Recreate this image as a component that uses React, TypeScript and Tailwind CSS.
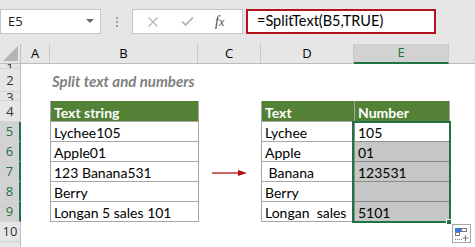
import React from "react";

const cellFont = { fontFamily: "Lato, 'Liberation Sans', sans-serif" };
const uiFont = { fontFamily: "'Open Sans', 'Liberation Sans', sans-serif" };

type Row = { n: string; h: number; sel?: boolean; kind?: "title" | "head" | "data" | "empty"; b?: string; d?: string; e?: string; eActive?: boolean; arrow?: boolean };

const rows: Row[] = [
  { n: "1", h: 5, kind: "empty" },
  { n: "2", h: 23, kind: "title" },
  { n: "3", h: 9, kind: "empty" },
  { n: "4", h: 21, kind: "head", b: "Text string", d: "Text", e: "Number" },
  { n: "5", h: 20, sel: true, kind: "data", b: "Lychee105", d: "Lychee", e: "105", eActive: true },
  { n: "6", h: 20, sel: true, kind: "data", b: "Apple01", d: "Apple", e: "01" },
  { n: "7", h: 20, sel: true, kind: "data", b: "123 Banana531", d: "\u00a0Banana", e: "123531", arrow: true },
  { n: "8", h: 20, sel: true, kind: "data", b: "Berry", d: "Berry", e: "" },
  { n: "9", h: 20, sel: true, kind: "data", b: "Longan 5 sales 101", d: "Longan\u00a0 sales", e: "5101" },
  { n: "10", h: 20, kind: "empty" },
  { n: "11", h: 20, kind: "empty" },
];

function RowHeader({ r }: { r: Row }) {
  return (
    <div
      className={`w-[21px] shrink-0 flex justify-center overflow-hidden border-b border-[#d4d4d4] text-[13px] leading-none ${
        r.sel ? "bg-[#d2d2d2] text-[#217346] border-r-2 border-r-[#217346]" : "bg-[#e6e6e6] text-[#333] border-r border-r-[#bdbdbd]"
      } ${r.h < 12 ? (r.n === "1" ? "items-end" : "items-start") : "items-center"}`}
      style={{ ...uiFont, height: r.h }}
    >
      <span className={r.n === "1" ? "translate-y-[6px]" : r.n === "3" ? "-translate-y-[1px]" : ""}>{r.n}</span>
    </div>
  );
}

function GridRow({ r }: { r: Row }) {
  const isTable = r.kind === "head" || r.kind === "data";
  const head = r.kind === "head";
  const cellBase = "flex items-end pb-[1px] px-[3px] text-[14px] leading-none whitespace-nowrap overflow-hidden";
  return (
    <div className="flex" style={{ height: r.h }}>
      <RowHeader r={r} />
      <div className="w-[29px] shrink-0 bg-white" />
      {r.kind === "title" ? (
        <div className="w-[149px] shrink-0 bg-white flex items-end pb-[3px] pl-[2px]">
          <span className="text-[15px] font-bold italic text-[#7f7f7f] leading-none whitespace-nowrap" style={cellFont}>
            Split text and numbers
          </span>
        </div>
      ) : isTable ? (
        <div
          className={`w-[149px] shrink-0 border-x border-b border-[#a6a6a6] ${cellBase} ${head ? "bg-[#538135] text-white font-bold" : "bg-white text-black"}`}
          style={cellFont}
        >
          {r.b}
        </div>
      ) : (
        <div className="w-[149px] shrink-0 bg-white" />
      )}
      <div className="w-[62px] shrink-0 bg-white flex items-center justify-center">
        {r.arrow && (
          <svg width="40" height="8" viewBox="0 0 40 8" className="mt-[1px]">
            <line x1="2" y1="4" x2="30" y2="4" stroke="#b01010" strokeWidth="1.3" />
            <polygon points="28,1 37,4 28,7" fill="#b01010" />
          </svg>
        )}
      </div>
      {isTable ? (
        <>
          <div
            className={`w-[93px] shrink-0 border-l border-b border-[#a6a6a6] ${cellBase} ${head ? "bg-[#538135] text-white font-bold" : "bg-white text-black"}`}
            style={cellFont}
          >
            {r.d}
          </div>
          <div
            className={`w-[96px] shrink-0 border-x border-b ${cellBase} ${
              head
                ? "bg-[#538135] text-white font-bold border-[#a6a6a6]"
                : r.eActive
                ? "bg-white text-black border-[#8c8c8c]"
                : "bg-[#c6c6c6] text-black border-[#8c8c8c]"
            }`}
            style={cellFont}
          >
            {r.e}
          </div>
        </>
      ) : (
        <div className="w-[189px] shrink-0 bg-white" />
      )}
      <div className="flex-1 bg-white" />
    </div>
  );
}

function ColHeader({ label, w, sel }: { label: string; w: number; sel?: boolean }) {
  return (
    <div
      className={`shrink-0 h-[20px] flex items-center justify-center text-[13px] border-r border-[#c8c8c8] ${
        sel ? "bg-[#d2d2d2] text-[#217346] border-b-2 border-b-[#217346]" : "bg-[#e6e6e6] text-black border-b border-b-[#bdbdbd]"
      }`}
      style={{ ...uiFont, width: w }}
    >
      {label}
    </div>
  );
}

export default function App() {
  return (
    <div className="w-[475px] h-[247px] overflow-hidden bg-white relative select-none">
      {/* formula bar */}
      <div className="h-[44px] bg-[#e6e6e6] flex items-start pt-[9px]">
        <div className="w-[101px] h-[25px] bg-white border border-[#c6c6c6] flex items-center justify-between pl-[7px] pr-[6px]">
          <span className="text-[13px] text-[#222]" style={uiFont}>E5</span>
          <svg width="8" height="5" viewBox="0 0 8 5"><polygon points="0,0 8,0 4,4" fill="#6a6a6a" /></svg>
        </div>
        <div className="w-[31px] h-[25px] flex flex-col items-center justify-center gap-[2px]">
          <div className="w-[2px] h-[2px] bg-[#a0a0a0]" />
          <div className="w-[2px] h-[2px] bg-[#a0a0a0]" />
          <div className="w-[2px] h-[2px] bg-[#a0a0a0]" />
        </div>
        <div className="w-[111px] h-[25px] bg-white border border-[#c6c6c6] flex items-center">
          <svg width="12" height="12" viewBox="0 0 12 12" className="ml-[14px]">
            <path d="M1.5 1.5 L10.5 10.5 M10.5 1.5 L1.5 10.5" stroke="#b8b8b8" strokeWidth="1.3" />
          </svg>
          <svg width="13" height="11" viewBox="0 0 13 11" className="ml-[22px]">
            <path d="M1 5.5 L4.5 9 L12 1.5" stroke="#b8b8b8" strokeWidth="1.8" fill="none" />
          </svg>
          <span className="ml-[21px] text-[14px] italic text-[#444] leading-none" style={{ fontFamily: "'Liberation Serif', serif" }}>
            f<span className="text-[12px]">x</span>
          </span>
        </div>
        <div className="w-[3px]" />
        <div className="w-[190px] h-[25px] bg-white border-2 border-[#b5121b] flex items-center pl-[9px]">
          <span className="text-[14.5px] text-black leading-none" style={cellFont}>=SplitText(B5,TRUE)</span>
        </div>
      </div>
      {/* column headers */}
      <div className="flex h-[20px]">
        <div className="w-[21px] shrink-0 h-[20px] bg-[#e6e6e6] border-r border-b border-[#bdbdbd] flex items-end justify-end p-[2px]">
          <svg width="15" height="15" viewBox="0 0 15 15"><polygon points="15,0 15,15 0,15" fill="#b4b4b4" /></svg>
        </div>
        <ColHeader label="A" w={29} />
        <ColHeader label="B" w={148} />
        <ColHeader label="C" w={63} />
        <ColHeader label="D" w={93} />
        <ColHeader label="E" w={95} sel />
        <div className="flex-1 h-[20px] bg-[#e6e6e6] border-b border-[#bdbdbd]" />
      </div>
      {/* grid */}
      <div className="relative">
        {rows.map((r) => (
          <GridRow key={r.n} r={r} />
        ))}
        {/* selection outline E5:E9 */}
        <div className="absolute left-[352px] top-[57px] w-[99px] h-[102px] border-2 border-[#217346] pointer-events-none" />
        <div className="absolute left-[446px] top-[155px] w-[6px] h-[6px] bg-[#217346] border border-white pointer-events-none" />
        {/* quick analysis icon */}
        <div className="absolute left-[452px] top-[160px] w-[19px] h-[19px] bg-white border border-[#a6a6a6] flex items-center justify-center">
          <svg width="15" height="14" viewBox="0 0 15 14">
            <rect x="1" y="1" width="6" height="4" fill="#3b7bdb" />
            <rect x="7.5" y="1.5" width="5" height="3" fill="none" stroke="#7a7a7a" strokeWidth="1" />
            <rect x="1.5" y="5.5" width="4" height="3" fill="none" stroke="#7a7a7a" strokeWidth="1" />
            <path d="M1 12.5 H8" stroke="#7a7a7a" strokeWidth="1" strokeDasharray="1 1" />
            <path d="M11.5 8 V14 M8.5 11 H14.5" stroke="#7a7a7a" strokeWidth="1" />
          </svg>
        </div>
      </div>
    </div>
  );
}
